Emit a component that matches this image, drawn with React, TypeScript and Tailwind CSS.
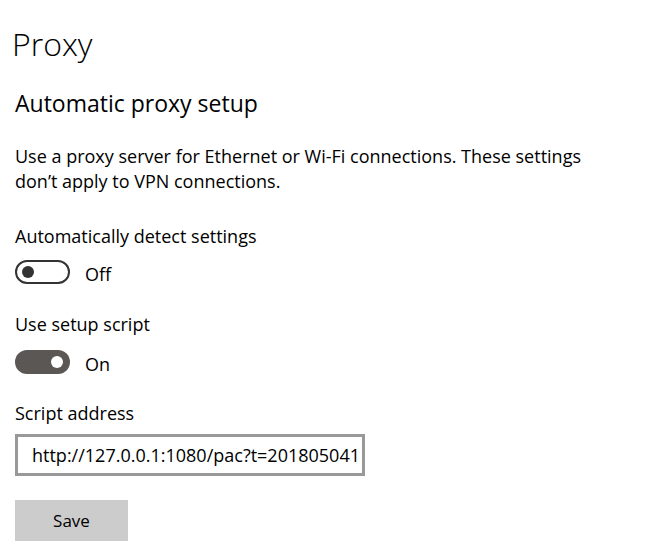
import React from 'react';

const Toggle: React.FC<{ on: boolean; label: string }> = ({ on, label }) => (
    <div className="flex items-center h-[24px]">
        {on ? (
            <div className="w-[55px] h-[24px] rounded-full bg-[#5a5755] flex items-center justify-end pr-[7px]">
                <div className="w-[12px] h-[12px] rounded-full bg-white" />
            </div>
        ) : (
            <div className="w-[55px] h-[24px] rounded-full border-2 border-[#333333] flex items-center pl-[5px]">
                <div className="w-[12px] h-[12px] rounded-full bg-[#333333]" />
            </div>
        )}
        <span className="ml-[15px] mt-[3px] text-[18px] leading-[24px]">{label}</span>
    </div>
);

export default function App() {
    return (
        <div className="w-[656px] h-[560px] bg-white text-black pl-[15px] pt-[24px]" style={{ fontFamily: '"Open Sans", "Noto Sans", sans-serif' }}>
            <h1 className="-ml-[3px] text-[32px] font-light leading-[40px]">Proxy</h1>
            <h2 className="mt-[24px] text-[23px] font-normal leading-[30px]">Automatic proxy setup</h2>
            <p className="mt-[26px] text-[18px] leading-[25px] w-[570px]">
                Use a proxy server for Ethernet or Wi-Fi connections. These settings don’t apply to VPN connections.
            </p>
            <div className="mt-[31px] text-[18px] leading-[22px]">Automatically detect settings</div>
            <div className="mt-[13px]">
                <Toggle on={false} label="Off" />
            </div>
            <div className="mt-[29px] text-[18px] leading-[22px]">Use setup script</div>
            <div className="mt-[15px]">
                <Toggle on={true} label="On" />
            </div>
            <div className="mt-[28px] text-[18px] leading-[22px]">Script address</div>
            <input
                className="mt-[10px] block w-[350px] h-[42px] border-[3px] border-[#999999] pl-[14px] text-[18px] outline-none"
                defaultValue="http://127.0.0.1:1080/pac?t=201805041"
                style={{ fontFamily: '"Open Sans", "Noto Sans", sans-serif' }}
            />
            <button className="mt-[24px] block w-[113px] h-[41px] bg-[#cccccc] text-[17px] pt-[1px]">Save</button>
        </div>
    );
}
